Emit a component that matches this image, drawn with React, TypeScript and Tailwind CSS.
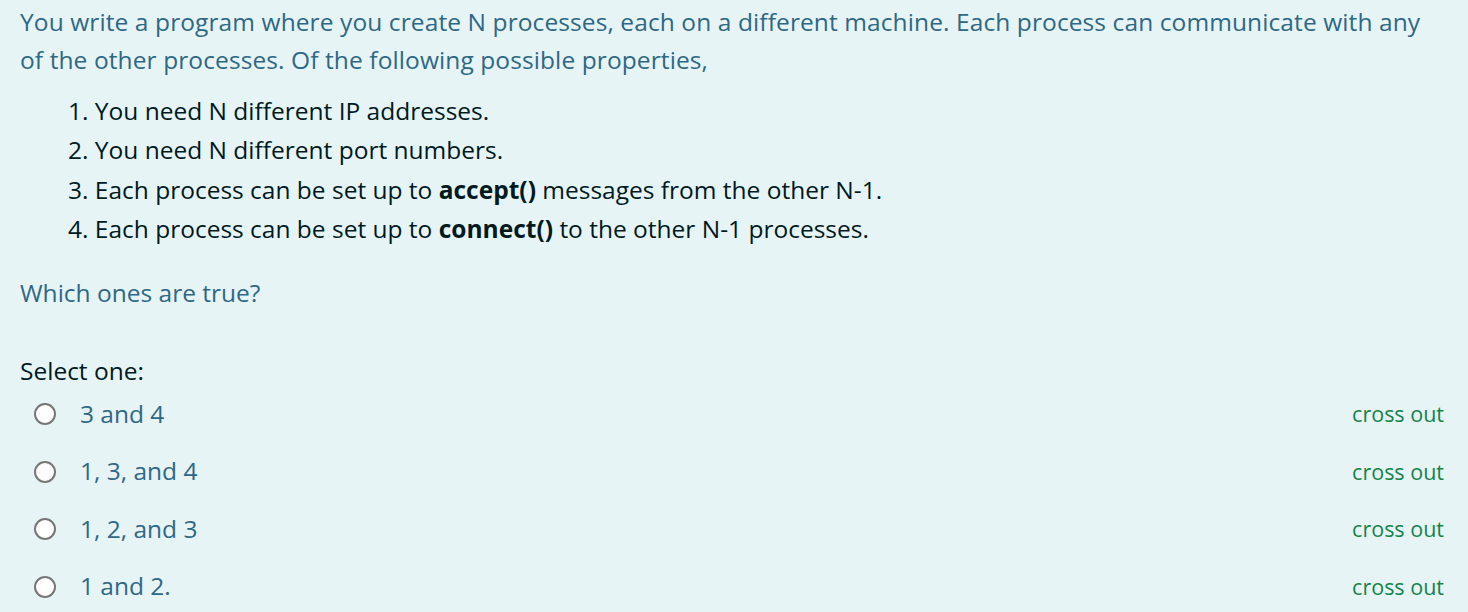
import React from "react";

const answers = ["3 and 4", "1, 3, and 4", "1, 2, and 3", "1 and 2."];

function Radio() {
  return (
    <span className="block w-[22px] h-[22px] rounded-full border-2 border-[#767676] bg-white shrink-0" />
  );
}

export default function App() {
  return (
    <div
      className="w-[1468px] h-[612px] bg-[#e7f4f6] overflow-hidden pl-[20px] pr-[24px] pt-[3px] text-[24.5px]"
      style={{ fontFamily: '"Open Sans", "Noto Sans", sans-serif' }}
    >
      <p className="text-[#2e6886] leading-[38px] whitespace-nowrap tracking-[0.1px]">
        You write a program where you create N processes, each on a different machine. Each process can communicate with any
        <br />
        of the other processes. Of the following possible properties,
      </p>
      <ol className="mt-[12px] pl-[48px] text-[#001a1e] leading-[39.3px]">
        <li>1. You need N different IP addresses.</li>
        <li>2. You need N different port numbers.</li>
        <li>
          3. Each process can be set up to <b className="font-bold">accept()</b> messages from the other N-1.
        </li>
        <li>
          4. Each process can be set up to <b className="font-bold">connect()</b> to the other N-1 processes.
        </li>
      </ol>
      <p className="mt-[26px] text-[#2e6886] leading-[38px]">Which ones are true?</p>
      <p className="mt-[40px] text-[#001a1e] leading-[38px]">Select one:</p>
      <div className="mt-[5px] flex flex-col gap-[19.5px]">
        {answers.map((a) => (
          <div key={a} className="flex items-center h-[38px] pl-[14px]">
            <Radio />
            <span className="ml-[24px] text-[#2e6886]">{a}</span>
            <span className="ml-auto text-[#13844a] text-[21.5px]">cross out</span>
          </div>
        ))}
      </div>
    </div>
  );
}
